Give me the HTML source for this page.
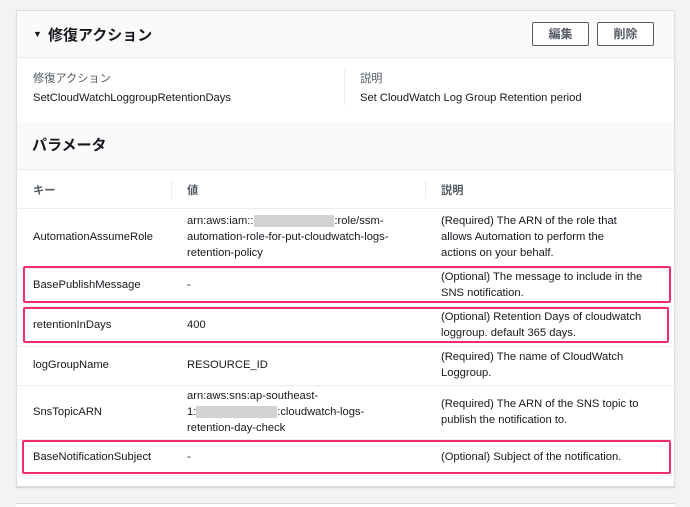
<!DOCTYPE html>
<html><head><meta charset="utf-8"><style>
*{margin:0;padding:0;box-sizing:border-box}
body{width:690px;height:506px;background:#f2f3f3;font-family:"Liberation Sans","Noto Sans CJK JP",sans-serif;font-size:11.2px;color:#16191f;position:relative;overflow:hidden}
.a{position:absolute;white-space:nowrap}
.card{position:absolute;left:16px;top:10px;width:659px;height:477px;background:#fff;border:1px solid #dcdede;box-shadow:0 1px 1px rgba(0,0,0,.15)}
.hl{position:absolute;left:16px;width:659px;height:1px;background:#eaeded}
.btn{position:absolute;top:22px;width:57px;height:24px;border:1px solid #545b64;border-radius:2px;background:#fff;font-weight:bold;font-size:12px;color:#545b64;text-align:center;line-height:22px}
.red{position:absolute;border:2.5px solid #ef2f6a;border-radius:2px}
.t{position:absolute;line-height:16px}
</style></head><body>
<div class="card"></div>
<div class="a" style="left:17px;top:11px;width:657px;height:47px;background:#fafafa"></div>
<div class="hl" style="top:57px"></div>
<div class="a" style="left:17px;top:122px;width:657px;height:47px;background:#fafafa"></div>
<div class="hl" style="top:169px"></div>
<div class="hl" style="top:208px"></div>
<div class="hl" style="top:268px"></div>
<div class="hl" style="top:306px"></div>
<div class="hl" style="top:346px"></div>
<div class="hl" style="top:385px"></div>
<div class="hl" style="top:439px"></div>
<div class="hl" style="top:475px"></div>
<div class="a" style="left:33px;top:29px;font-size:9px">▼</div>
<div class="a" style="left:48px;top:24px;font-size:15px;font-weight:bold">修復アクション</div>
<div class="btn" style="left:532px">編集</div>
<div class="btn" style="left:597px">削除</div>
<div class="a" style="left:33px;top:70px;color:#545b64">修復アクション</div>
<div class="a" style="left:33px;top:92px">SetCloudWatchLoggroupRetentionDays</div>
<div class="a" style="left:344px;top:69px;width:1px;height:36px;background:#eaeded"></div>
<div class="a" style="left:360px;top:70px;color:#545b64">説明</div>
<div class="a" style="left:360px;top:92px">Set CloudWatch Log Group Retention period</div>
<div class="a" style="left:32px;top:134px;font-size:15px;font-weight:bold">パラメータ</div>
<div class="a" style="left:33px;top:182px;font-weight:bold;color:#545b64">キー</div>
<div class="a" style="left:171px;top:180px;width:1px;height:19px;background:#eaeded"></div>
<div class="a" style="left:187px;top:182px;font-weight:bold;color:#545b64">値</div>
<div class="a" style="left:425px;top:180px;width:1px;height:19px;background:#eaeded"></div>
<div class="a" style="left:441px;top:182px;font-weight:bold;color:#545b64">説明</div>

<div class="t a" style="left:33px;top:229px">AutomationAssumeRole</div>
<div class="t" style="left:187px;top:213px;width:235px">arn:aws:iam::<span style="background:#d2d2d2;color:#d2d2d2">8888888888888</span>:role/ssm-<br>automation-role-for-put-cloudwatch-logs-<br>retention-policy</div>
<div class="t" style="left:441px;top:213px;width:225px">(Required) The ARN of the role that<br>allows Automation to perform the<br>actions on your behalf.</div>

<div class="t a" style="left:33px;top:277px">BasePublishMessage</div>
<div class="t a" style="left:187px;top:277px">-</div>
<div class="t" style="left:441px;top:269px;width:225px">(Optional) The message to include in the<br>SNS notification.</div>

<div class="t a" style="left:33px;top:317px">retentionInDays</div>
<div class="t a" style="left:187px;top:317px">400</div>
<div class="t" style="left:441px;top:309px;width:225px">(Optional) Retention Days of cloudwatch<br>loggroup. default 365 days.</div>

<div class="t a" style="left:33px;top:357px">logGroupName</div>
<div class="t a" style="left:187px;top:357px">RESOURCE_ID</div>
<div class="t" style="left:441px;top:349px;width:225px">(Required) The name of CloudWatch<br>Loggroup.</div>

<div class="t a" style="left:33px;top:404px">SnsTopicARN</div>
<div class="t" style="left:187px;top:388px;width:235px">arn:aws:sns:ap-southeast-<br>1:<span style="background:#d2d2d2;color:#d2d2d2">8888888888888</span>:cloudwatch-logs-<br>retention-day-check</div>
<div class="t" style="left:441px;top:396px;width:225px">(Required) The ARN of the SNS topic to<br>publish the notification to.</div>

<div class="t a" style="left:33px;top:449px">BaseNotificationSubject</div>
<div class="t a" style="left:187px;top:449px">-</div>
<div class="t a" style="left:441px;top:449px">(Optional) Subject of the notification.</div>

<div class="red" style="left:23px;top:266px;width:648px;height:37px"></div>
<div class="red" style="left:23px;top:307px;width:646px;height:36px"></div>
<div class="red" style="left:22px;top:440px;width:649px;height:34px"></div>
<div class="a" style="left:16px;top:503px;width:659px;height:4px;background:#fff;border-top:1px solid #dcdede"></div>
</body></html>
